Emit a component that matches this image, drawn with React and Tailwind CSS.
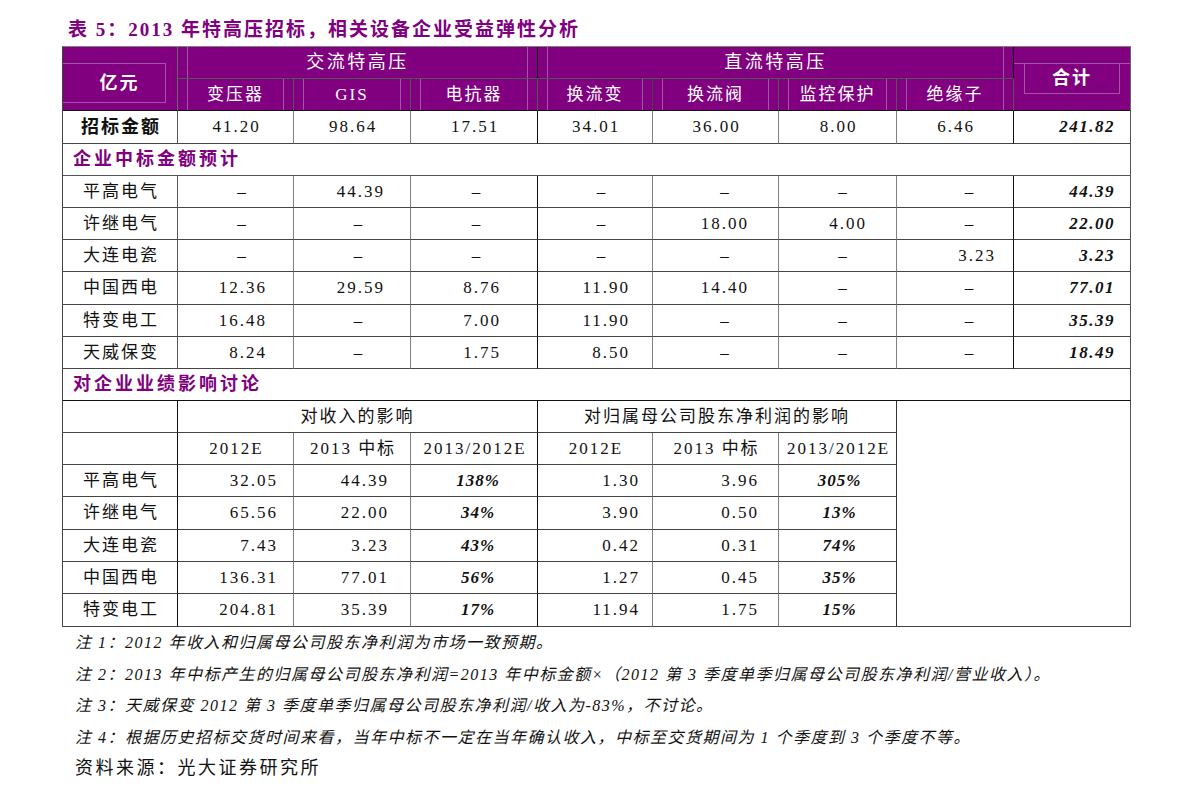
import React from 'react';

const subHeads = ['变压器', 'GIS', '电抗器', '换流变', '换流阀', '监控保护', '绝缘子'];

const bidRow = ['41.20', '98.64', '17.51', '34.01', '36.00', '8.00', '6.46'];

const companies = [
  ['平高电气', ['–', '44.39', '–', '–', '–', '–', '–'], '44.39'],
  ['许继电气', ['–', '–', '–', '–', '18.00', '4.00', '–'], '22.00'],
  ['大连电瓷', ['–', '–', '–', '–', '–', '–', '3.23'], '3.23'],
  ['中国西电', ['12.36', '29.59', '8.76', '11.90', '14.40', '–', '–'], '77.01'],
  ['特变电工', ['16.48', '–', '7.00', '11.90', '–', '–', '–'], '35.39'],
  ['天威保变', ['8.24', '–', '1.75', '8.50', '–', '–', '–'], '18.49'],
];

const impact = [
  ['平高电气', '32.05', '44.39', '138%', '1.30', '3.96', '305%'],
  ['许继电气', '65.56', '22.00', '34%', '3.90', '0.50', '13%'],
  ['大连电瓷', '7.43', '3.23', '43%', '0.42', '0.31', '74%'],
  ['中国西电', '136.31', '77.01', '56%', '1.27', '0.45', '35%'],
  ['特变电工', '204.81', '35.39', '17%', '11.94', '1.75', '15%'],
];

// right border colour per column (section 1)
const colBorder = [
  'border-r-[#555]', 'border-r-[#808080]', 'border-r-[#808080]', 'border-r-[#111]',
  'border-r-[#808080]', 'border-r-[#808080]', 'border-r-[#808080]', 'border-r-[#111]', 'border-r-[#555]',
];

// number padding (right aligned) and dash offset per column
const numPad = ['pr-[26px]', 'pr-[25px]', 'pr-[36px]', 'pr-[22px]', 'pr-[29px]', 'pr-[29px]', 'pr-[17px]'];
const dashPad = ['pl-[14px]', 'pl-[14px]', 'pl-[6px]', 'pl-[14px]', 'pl-[20px]', 'pl-[12px]', 'pl-[30px]'];

const impactPad = ['pr-[15px]', 'pr-[21px]', 'pl-[8px]', 'pr-[12px]', 'pr-[19px]', 'pl-[4px]'];

const cell = 'border-r border-b border-b-[#444] flex items-center';
const faint = 'border-[#a553a5]';

function App() {
  return (
    <div className="w-[1191px] h-[797px] bg-white text-[#111] font-['Liberation_Serif','Noto_Sans_CJK_SC',serif]">
      <div className="h-[46px] pl-[68px] pt-[17px] text-[19px] leading-[26px] tracking-[2px] font-bold text-[#800080]">
        表 5：2013 年特高压招标，相关设备企业受益弹性分析
      </div>

      <div className="ml-[62px] w-[1069px] grid grid-cols-[115px_116px_117px_127px_115px_126px_118px_117px_117px] grid-rows-[32px_32px_33px_32px_32px_32px_32px_33px_32px_32px_32px_32px_32px_32px_33px_32px_32px_33px] border-l border-l-[#444] border-t border-t-[#808080] text-[17px] tracking-[2px]">
        {/* header */}
        <div className="row-span-2 bg-[#800080] text-white border-r border-r-[#666] border-b border-b-[#111] flex flex-col">
          <div className="h-[16px]" />
          <div className={`h-[40px] mr-[11px] border-y border-r ${faint} flex items-center justify-center pl-[11px] font-bold text-[18px]`}>
            亿元
          </div>
        </div>
        <div className="col-span-3 bg-[#800080] text-white border-r border-r-[#111] border-b border-b-[#555]">
          <div className={`h-full mx-[9px] border-x ${faint} flex items-center justify-center text-[18px] tracking-[2.5px]`}>交流特高压</div>
        </div>
        <div className="col-span-4 bg-[#800080] text-white border-r border-r-[#111] border-b border-b-[#555]">
          <div className={`h-full mx-[9px] border-x ${faint} flex items-center justify-center text-[18px] tracking-[2.5px]`}>直流特高压</div>
        </div>
        <div className="row-span-2 bg-[#800080] text-white border-r border-r-[#666] border-b border-b-[#111] flex flex-col">
          <div className="h-[16px]" />
          <div className={`border-t ${faint}`}>
            <div className={`mx-[10px] h-[30px] border-x border-b ${faint} flex items-center justify-center font-bold text-[18px]`}>
              合计
            </div>
          </div>
        </div>
        {subHeads.map((h, i) => (
          <div key={h} className={`bg-[#800080] text-white border-r border-b border-b-[#111] ${i === 3 ? 'border-r-[#444]' : 'border-r-[#555]'}`}>
            <div className={`h-full mx-[9px] border-x ${faint} flex items-center justify-center text-[17px]`}>{h}</div>
          </div>
        ))}

        {/* bid amount */}
        <div className={`${cell} ${colBorder[0]} justify-center font-bold text-[18px] pl-[2px]`}>招标金额</div>
        {bidRow.map((v, i) => (
          <div key={i} className={`${cell} ${colBorder[i + 1]} justify-center pl-[2px]`}>{v}</div>
        ))}
        <div className={`${cell} ${colBorder[8]} justify-end pr-[15px] font-bold italic tracking-[1.5px]`}>241.82</div>

        {/* section 1 */}
        <div className="col-span-9 border-r border-r-[#555] border-b border-b-[#555] flex items-center pl-[10px] text-[18px] tracking-[3px] font-bold text-[#800080]">
          企业中标金额预计
        </div>
        {companies.map(([name, vals, total]) => (
          <React.Fragment key={name}>
            <div className={`${cell} ${colBorder[0]} justify-center pl-[2px]`}>{name}</div>
            {vals.map((v, i) =>
              v === '–' ? (
                <div key={i} className={`${cell} ${colBorder[i + 1]} justify-center ${dashPad[i]}`}>–</div>
              ) : (
                <div key={i} className={`${cell} ${colBorder[i + 1]} justify-end ${numPad[i]}`}>{v}</div>
              )
            )}
            <div className={`${cell} ${colBorder[8]} justify-end pr-[15px] font-bold italic tracking-[1.5px]`}>{total}</div>
          </React.Fragment>
        ))}

        {/* section 2 */}
        <div className="col-span-9 border-r border-r-[#555] border-b border-b-[#111] flex items-center pl-[10px] text-[18px] tracking-[3px] font-bold text-[#800080]">
          对企业业绩影响讨论
        </div>
        <div className={`${cell} border-r-[#111]`} />
        <div className={`${cell} col-span-3 border-r-[#111] justify-center text-[17px]`}>对收入的影响</div>
        <div className={`${cell} col-span-3 border-r-[#333] justify-center text-[17px]`}>对归属母公司股东净利润的影响</div>
        <div className="col-span-2 row-span-7 border-r border-r-[#555] border-b border-b-[#444]" />

        <div className={`${cell} border-r-[#111]`} />
        {['2012E', '2013 中标', '2013/2012E', '2012E', '2013 中标', '2013/2012E'].map((h, i) => (
          <div key={i} className={`${cell} ${i === 2 ? 'border-r-[#111]' : i === 5 ? 'border-r-[#333]' : 'border-r-[#808080]'} justify-center pl-[2px]`}>
            {h}
          </div>
        ))}

        {impact.map(([name, ...vals]) => (
          <React.Fragment key={name + 'i'}>
            <div className={`${cell} border-r-[#111] justify-center pl-[2px]`}>{name}</div>
            {vals.map((v, i) => (
              <div
                key={i}
                className={`${cell} ${i === 2 ? 'border-r-[#111]' : i === 5 ? 'border-r-[#333]' : 'border-r-[#808080]'} ${
                  i === 2 || i === 5 ? 'justify-center font-bold italic tracking-[1px]' : 'justify-end'
                } ${impactPad[i]}`}
              >
                {v}
              </div>
            ))}
          </React.Fragment>
        ))}
      </div>

      <div className="pl-[75px] text-[16px] tracking-[1.5px] italic">
        <div className="h-[31.5px] leading-[31px]">注 1：2012 年收入和归属母公司股东净利润为市场一致预期。</div>
        <div className="h-[31.5px] leading-[31px]">
          注 2：2013 年中标产生的归属母公司股东净利润=2013 年中标金额×（2012 第 3 季度单季归属母公司股东净利润/营业收入）。
        </div>
        <div className="h-[31.5px] leading-[31px]">注 3：天威保变 2012 第 3 季度单季归属母公司股东净利润/收入为-83%，不讨论。</div>
        <div className="h-[31.5px] leading-[31px]">
          注 4：根据历史招标交货时间来看，当年中标不一定在当年确认收入，中标至交货期间为 1 个季度到 3 个季度不等。
        </div>
        <div className="h-[31.5px] leading-[31px] not-italic text-[18px] tracking-[2.5px]">资料来源：光大证券研究所</div>
      </div>
    </div>
  );
}

export default App;
